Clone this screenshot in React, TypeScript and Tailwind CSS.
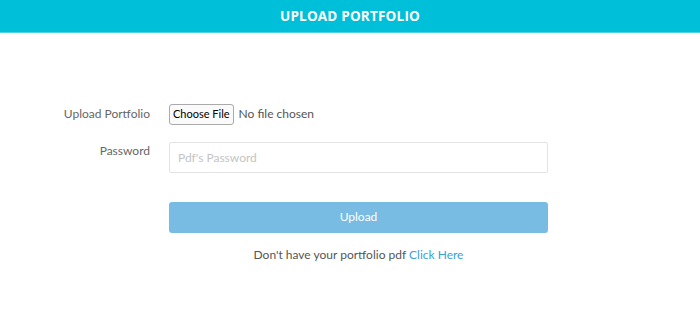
export default function App() {
  return (
    <div className="min-h-screen bg-white" style={{ fontFamily: 'Lato, "Open Sans", sans-serif' }}>
      {/* Header */}
      <div className="flex h-[33px] items-center justify-center border-b border-[#4fd3e6] bg-[#00bfd9]">
        <h1 className="text-[13.5px] font-bold tracking-[0.2px] text-white" style={{ fontFamily: '"Open Sans", sans-serif' }}>
          UPLOAD PORTFOLIO
        </h1>
      </div>

      <div className="pt-[71px]">
        {/* Upload row */}
        <div className="flex items-center">
          <label className="w-[150px] text-right text-[12px] text-[#666]">Upload Portfolio</label>
          <div className="ml-[19px] flex items-center">
            <input
              type="file"
              className="text-[12px] text-[#555] file:mr-[5px] file:rounded-[3px] file:border file:border-[#aaa] file:bg-[#fafafa] file:px-[3px] file:py-[1px] file:text-[11px] file:text-black"
              style={{ fontFamily: 'Lato, sans-serif' }}
            />
          </div>
        </div>

        {/* Password row */}
        <div className="mt-[17px] flex items-start">
          <label className="w-[150px] text-right text-[12px] text-[#666]">Password</label>
          <input
            type="password"
            placeholder="Pdf's Password"
            className="ml-[19px] h-[31px] w-[379px] rounded-[2px] border border-[#e3e3e3] px-[8px] text-[12px] placeholder:text-[#c4c4c4] outline-none"
          />
        </div>

        {/* Upload button */}
        <div className="mt-[29px] flex">
          <div className="w-[150px]" />
          <button className="ml-[19px] h-[31px] w-[379px] rounded-[3px] bg-[#78bbe3] text-[12px] text-white">
            Upload
          </button>
        </div>

        <div className="mt-[13px] flex">
          <div className="w-[150px]" />
          <p className="ml-[19px] w-[379px] text-center text-[12px] text-[#555]">
            Don't have your portfolio pdf <a className="text-[#3a9fd8]">Click Here</a>
          </p>
        </div>
      </div>
    </div>
  )
}
